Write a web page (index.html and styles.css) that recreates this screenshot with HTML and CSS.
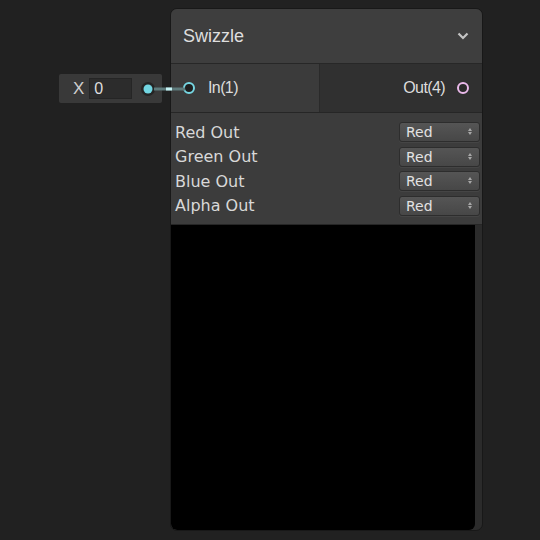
FILE: index.html
```html
<!DOCTYPE html>
<html lang="en">

<head>
    <meta charset="UTF-8">
    <title>Swizzle node</title>
    <link rel="stylesheet" href="styles.css">
</head>

<body>
    <div class="canvas">
        <div class="value-node">
            <span class="value-label">X</span>
            <span class="value-field">0</span>
        </div>

        <svg class="edge" width="60" height="20" viewBox="0 0 60 20">
            <circle cx="8" cy="10" r="7" fill="#242424" />
            <circle cx="8" cy="10" r="4.5" fill="#72d6e2" />
            <line x1="14" y1="10" x2="45" y2="10" stroke="#5f7b7c" stroke-width="3" />
            <line x1="26" y1="10" x2="32" y2="10" stroke="#c6f4f6" stroke-width="3" />
        </svg>

        <div class="node">
            <div class="node-header">
                <span class="node-title">Swizzle</span>
                <svg class="chevron" width="12" height="8" viewBox="0 0 12 8">
                    <path d="M1.5 1.5 L6 6 L10.5 1.5" fill="none" stroke="#c4c4c4" stroke-width="2.2" />
                </svg>
            </div>
            <div class="node-ports">
                <div class="port-col inputs">
                    <span class="port-dot in"></span>
                    <span class="port-name">In(1)</span>
                </div>
                <div class="port-col outputs">
                    <span class="port-name">Out(4)</span>
                    <span class="port-dot out"></span>
                </div>
            </div>
            <div class="node-controls">
                <div class="control-row">
                    <span class="control-label">Red Out</span>
                    <div class="select">Red<span class="select-arrows"></span></div>
                </div>
                <div class="control-row">
                    <span class="control-label">Green Out</span>
                    <div class="select">Red<span class="select-arrows"></span></div>
                </div>
                <div class="control-row">
                    <span class="control-label">Blue Out</span>
                    <div class="select">Red<span class="select-arrows"></span></div>
                </div>
                <div class="control-row">
                    <span class="control-label">Alpha Out</span>
                    <div class="select">Red<span class="select-arrows"></span></div>
                </div>
            </div>
            <div class="node-body">
                <div class="preview"></div>
            </div>
        </div>
    </div>
</body>

</html>
```

FILE: styles.css
```css
:root {
    --bg-color: #212121;
    --node-border: #181818;
    --port-in: #76d7e3;
    --port-out: #eab9ea;
}

body {
    margin: 0;
    background-color: var(--bg-color);
    font-family: "Liberation Sans", Arial, sans-serif;
    color: #dcdcdc;
}

.canvas {
    position: relative;
    width: 540px;
    height: 540px;
    overflow: hidden;
}

/* value node on the left */
.value-node {
    position: absolute;
    left: 59px;
    top: 74px;
    width: 103px;
    height: 29px;
    box-sizing: border-box;
    background-color: #393939;
    border-radius: 2px;
    display: flex;
    align-items: center;
    padding-left: 14px;
    gap: 5px;
}

.value-label {
    font-size: 17px;
    color: #cfcfcf;
}

.value-field {
    width: 43px;
    height: 21px;
    box-sizing: border-box;
    background-color: #2c2c2c;
    border: 1px solid #252525;
    padding-left: 4px;
    font-size: 16px;
    line-height: 19px;
    color: #dedede;
}

.edge {
    position: absolute;
    left: 140px;
    top: 79px;
    z-index: 2;
}

/* swizzle node */
.node {
    position: absolute;
    left: 170px;
    top: 8px;
    width: 313px;
    height: 523px;
    box-sizing: border-box;
    border: 1px solid var(--node-border);
    border-radius: 7px;
    background-color: #2b2b2b;
    display: flex;
    flex-direction: column;
    overflow: hidden;
}

.node-header {
    height: 54px;
    flex-shrink: 0;
    background-color: #3e3e3e;
    border-bottom: 1px solid #272727;
    display: flex;
    align-items: center;
    justify-content: space-between;
    padding: 0 12px;
}

.node-title {
    font-size: 18px;
    color: #dedede;
    padding-top: 1px;
}

.chevron {
    margin-right: 1px;
}

.node-ports {
    height: 48px;
    flex-shrink: 0;
    display: flex;
    border-bottom: 1px solid #262626;
}

.port-col {
    display: flex;
    align-items: center;
    font-size: 16px;
    letter-spacing: -0.6px;
}

.port-col.inputs {
    width: 149px;
    box-sizing: border-box;
    background-color: #3b3b3b;
    border-right: 1px solid #2a2a2a;
    padding-left: 12px;
    gap: 13px;
}

.port-col.outputs {
    flex: 1;
    background-color: #303030;
    justify-content: flex-end;
    padding-right: 13px;
    gap: 12px;
}

.port-dot {
    width: 8px;
    height: 8px;
    border-radius: 50%;
    border: 2px solid var(--port-in);
    background-color: #1f1f1f;
    margin-top: -1px;
}

.port-dot.out {
    border-color: var(--port-out);
    background-color: #2a2a2a;
}

.node-controls {
    height: 112px;
    flex-shrink: 0;
    box-sizing: border-box;
    background-color: #3c3c3c;
    border-bottom: 1px solid #262626;
    padding: 7px 2px 0 4px;
}

.control-row {
    height: 24.5px;
    display: flex;
    align-items: center;
    justify-content: space-between;
}

.control-label {
    font-family: "DejaVu Sans", sans-serif;
    font-size: 16px;
    color: #d8d8d8;
}

.select {
    position: relative;
    width: 81px;
    height: 20px;
    box-sizing: border-box;
    border: 1px solid #2d2d2d;
    border-radius: 3px;
    background: linear-gradient(#555555, #474747);
    box-shadow: 0 1px 0 rgba(255, 255, 255, 0.05);
    font-family: "DejaVu Sans", sans-serif;
    font-size: 14px;
    line-height: 18px;
    padding-left: 6px;
    color: #e2e2e2;
}

.select-arrows {
    position: absolute;
    right: 7px;
    top: 5px;
    width: 0;
    height: 0;
    border-left: 2.5px solid transparent;
    border-right: 2.5px solid transparent;
    border-bottom: 3px solid #a8a8a8;
}

.select-arrows::after {
    content: '';
    position: absolute;
    left: -2.5px;
    top: 4px;
    border-left: 2.5px solid transparent;
    border-right: 2.5px solid transparent;
    border-top: 3px solid #a8a8a8;
}

.node-body {
    flex: 1;
    display: flex;
}

.preview {
    width: 304px;
    background-color: #000000;
    border-radius: 0 0 6px 6px;
}
```
